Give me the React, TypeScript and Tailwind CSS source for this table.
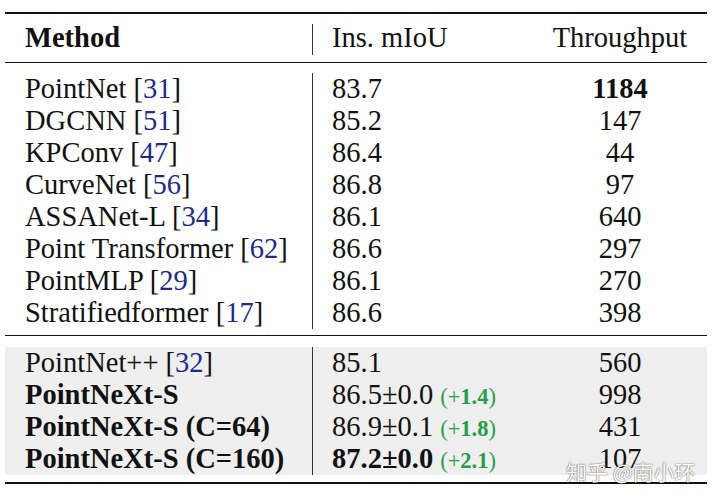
import React from 'react';

type Row = {
  name: string;
  cite?: string;
  miou: string;
  tp: string;
  tpBold?: boolean;
};

const baselines: Row[] = [
  { name: 'PointNet', cite: '31', miou: '83.7', tp: '1184', tpBold: true },
  { name: 'DGCNN', cite: '51', miou: '85.2', tp: '147' },
  { name: 'KPConv', cite: '47', miou: '86.4', tp: '44' },
  { name: 'CurveNet', cite: '56', miou: '86.8', tp: '97' },
  { name: 'ASSANet-L', cite: '34', miou: '86.1', tp: '640' },
  { name: 'Point Transformer', cite: '62', miou: '86.6', tp: '297' },
  { name: 'PointMLP', cite: '29', miou: '86.1', tp: '270' },
  { name: 'Stratifiedformer', cite: '17', miou: '86.6', tp: '398' },
];

const Cite = ({ n }: { n: string }) => (
  <>
    {' '}[<span className="text-[#1c2a8c]">{n}</span>]
  </>
);

const Gain = ({ v }: { v: string }) => (
  <span className="ml-[7px] text-[22.5px] text-[#23a047]">
    (+<b>{v}</b>)
  </span>
);

const TableRow = ({
  name,
  miou,
  tp,
}: {
  name: React.ReactNode;
  miou: React.ReactNode;
  tp: React.ReactNode;
}) => (
  <div className="flex h-[32px] leading-[32px]">
    <div className="w-[307px] pl-[20px] whitespace-nowrap">{name}</div>
    <div className="w-[221px] border-l border-[#333] pl-[19px] whitespace-nowrap">{miou}</div>
    <div className="flex-1 text-center">{tp}</div>
  </div>
);

export default function App() {
  return (
    <div className="relative w-[720px] h-[503px] overflow-hidden bg-white pt-[12px] pl-[5px] font-['Liberation_Serif',serif] text-[28.5px] text-[#111]">
      <div className="w-[702px]">
        {/* top rule */}
        <div className="h-[2px] bg-[#111]" />

        {/* header */}
        <div className="flex h-[48px]">
          <div className="w-[307px] pl-[20px] pt-[8px] leading-[32px] font-bold">Method</div>
          <div className="mt-[10px] h-[31px] w-[221px] border-l border-[#333] pl-[19px] leading-[27px]">
            Ins. mIoU
          </div>
          <div className="flex-1 pt-[8px] text-center leading-[32px]">Throughput</div>
        </div>
        <div className="h-px bg-[#111]" />

        {/* prior methods */}
        <div className="pt-[10px] pb-[6px]">
          {baselines.map((r) => (
            <TableRow
              key={r.name}
              name={
                <>
                  {r.name}
                  {r.cite && <Cite n={r.cite} />}
                </>
              }
              miou={r.miou}
              tp={r.tpBold ? <b>{r.tp}</b> : r.tp}
            />
          ))}
        </div>
        <div className="h-px bg-[#111]" />

        {/* ours */}
        <div className="mt-[11px] bg-[#efefef]">
          <TableRow
            name={
              <>
                PointNet++
                <Cite n="32" />
              </>
            }
            miou="85.1"
            tp="560"
          />
          <TableRow
            name={<b>PointNeXt-S</b>}
            miou={
              <>
                86.5±0.0
                <Gain v="1.4" />
              </>
            }
            tp="998"
          />
          <TableRow
            name={<b>PointNeXt-S (C=64)</b>}
            miou={
              <>
                86.9±0.1
                <Gain v="1.8" />
              </>
            }
            tp="431"
          />
          <TableRow
            name={<b>PointNeXt-S (C=160)</b>}
            miou={
              <>
                <b>87.2±0.0</b>
                <Gain v="2.1" />
              </>
            }
            tp="107"
          />
        </div>

        {/* bottom rule */}
        <div className="mt-[7px] h-[2px] bg-[#111]" />
      </div>

      {/* watermark */}
      <div className="absolute left-[566px] top-[456px] whitespace-nowrap font-['Noto_Sans_CJK_SC',sans-serif] text-[21px] leading-[30px] text-white [text-shadow:0_0_1px_rgba(0,0,0,0.7),0_0_2px_rgba(0,0,0,0.35)]">
        知乎 @南小环
      </div>
    </div>
  );
}
